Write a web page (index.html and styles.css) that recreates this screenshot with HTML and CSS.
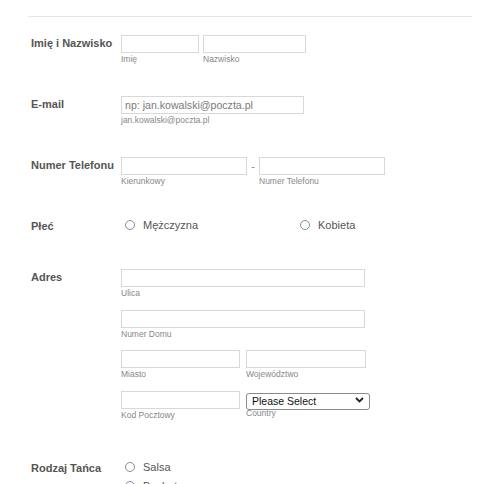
FILE: index.html
```html
<!DOCTYPE html>
<html lang="pl">
<head>
<meta charset="utf-8">
<title>Formularz</title>
<link rel="stylesheet" href="styles.css">
</head>
<body>
<div class="page">
  <div class="sep"></div>

  <div class="row">
    <div class="label">Imię i Nazwisko</div>
    <div class="fields hgroup">
      <div class="field"><input class="inp w-first" type="text"><span class="sub">Imię</span></div>
      <div class="field"><input class="inp w-last" type="text"><span class="sub">Nazwisko</span></div>
    </div>
  </div>

  <div class="row">
    <div class="label">E-mail</div>
    <div class="fields">
      <div class="field"><input class="inp w-email" type="text" placeholder="np: jan.kowalski@poczta.pl"><span class="sub">jan.kowalski@poczta.pl</span></div>
    </div>
  </div>

  <div class="row">
    <div class="label">Numer Telefonu</div>
    <div class="fields hgroup tight">
      <div class="field"><input class="inp w-phone" type="text"><span class="sub">Kierunkowy</span></div>
      <span class="dash">-</span>
      <div class="field"><input class="inp w-phone" type="text"><span class="sub">Numer Telefonu</span></div>
    </div>
  </div>

  <div class="row">
    <div class="label">Płeć</div>
    <div class="fields radios cols">
      <label class="opt"><span class="circle"></span><span>Mężczyzna</span></label>
      <label class="opt"><span class="circle"></span><span>Kobieta</span></label>
    </div>
  </div>

  <div class="row row-addr">
    <div class="label">Adres</div>
    <div class="fields addr">
      <div class="field"><input class="inp w-wide" type="text"><span class="sub">Ulica</span></div>
      <div class="field"><input class="inp w-wide" type="text"><span class="sub">Numer Domu</span></div>
      <div class="hgroup wide-gap">
        <div class="field"><input class="inp w-half" type="text"><span class="sub">Miasto</span></div>
        <div class="field"><input class="inp w-half2" type="text"><span class="sub">Województwo</span></div>
      </div>
      <div class="hgroup wide-gap">
        <div class="field"><input class="inp w-half" type="text"><span class="sub">Kod Pocztowy</span></div>
        <div class="field">
          <div class="sel-wrap">
            <select class="sel"><option>Please Select</option></select>
            <svg class="chev" width="9" height="6" viewBox="0 0 9 6"><path d="M1 1 L4.5 4.5 L8 1" fill="none" stroke="#222" stroke-width="1.8"/></svg>
          </div>
          <span class="sub sub-sel">Country</span>
        </div>
      </div>
    </div>
  </div>

  <div class="row">
    <div class="label">Rodzaj Tańca</div>
    <div class="fields radios stack">
      <label class="opt"><span class="circle"></span><span>Salsa</span></label>
      <label class="opt"><span class="circle"></span><span>Bachata</span></label>
    </div>
  </div>
</div>
</body>
</html>
```

FILE: styles.css
```css
html, body {
  margin: 0;
  padding: 0;
  background: #fff;
}
.page {
  font-family: "Liberation Sans", Arial, sans-serif;
  color: #555;
}
.sep {
  height: 1px;
  margin: 16px 28px 0;
  background: #e6e6e6;
}
.row {
  display: flex;
  padding: 18px 0 13px 31px;
}
.row-addr {
  padding-bottom: 21px;
}
.label {
  width: 90px;
  flex: none;
  font-size: 11px;
  font-weight: bold;
  line-height: 17px;
  color: #555;
}
.fields {
  display: flex;
  flex-direction: column;
}
.hgroup {
  display: flex;
  flex-direction: row;
  gap: 4px;
}
.hgroup.tight {
  gap: 0;
}
.hgroup.wide-gap {
  gap: 6px;
}
.field {
  display: flex;
  flex-direction: column;
}
.inp {
  box-sizing: border-box;
  height: 18px;
  margin: 0;
  padding: 0 3px;
  border: 1px solid #d8d8d8;
  border-radius: 0;
  background: #fff;
  font-family: "Liberation Sans", Arial, sans-serif;
  font-size: 10.6px;
  color: #555;
  outline: none;
}
.inp::placeholder {
  font-family: "Liberation Sans", Arial, sans-serif;
  font-size: 10.6px;
  color: #7a7a7a;
}
.w-first { width: 78px; }
.w-last { width: 103px; }
.w-email { width: 183px; }
.w-phone { width: 126px; }
.w-wide { width: 244px; }
.w-half { width: 119px; }
.w-half2 { width: 120px; }
.sub {
  padding-top: 1px;
  font-size: 8.5px;
  line-height: 11px;
  color: #888;
}
.dash {
  width: 12px;
  text-align: center;
  font-size: 11px;
  line-height: 18px;
  color: #888;
}
.addr {
  gap: 10.7px;
}
.sel-wrap {
  position: relative;
  width: 124px;
  height: 17px;
}
.sel {
  appearance: none;
  -webkit-appearance: none;
  box-sizing: border-box;
  width: 124px;
  height: 17px;
  margin: 0;
  padding: 0 0 0 5px;
  border: 1px solid #8a8a8a;
  border-radius: 3px;
  background: #fff;
  font-family: "Liberation Sans", Arial, sans-serif;
  font-size: 10.5px;
  color: #111;
}
.chev {
  position: absolute;
  right: 6px;
  top: 6px;
}
.sub-sel {
  padding-top: 0;
  line-height: 11px;
}
.radios {
  margin: -3px 0 4px;
}
.radios.cols {
  flex-direction: row;
}
.radios.cols .opt {
  width: 175px;
}
.opt {
  display: flex;
  align-items: center;
  height: 19px;
  font-size: 11px;
  color: #555;
}
.circle {
  box-sizing: border-box;
  width: 10px;
  height: 10px;
  margin: 1px 8px 0 4px;
  border: 1px solid #8c8c8c;
  border-radius: 50%;
  background: #fff;
  flex: none;
}
```
